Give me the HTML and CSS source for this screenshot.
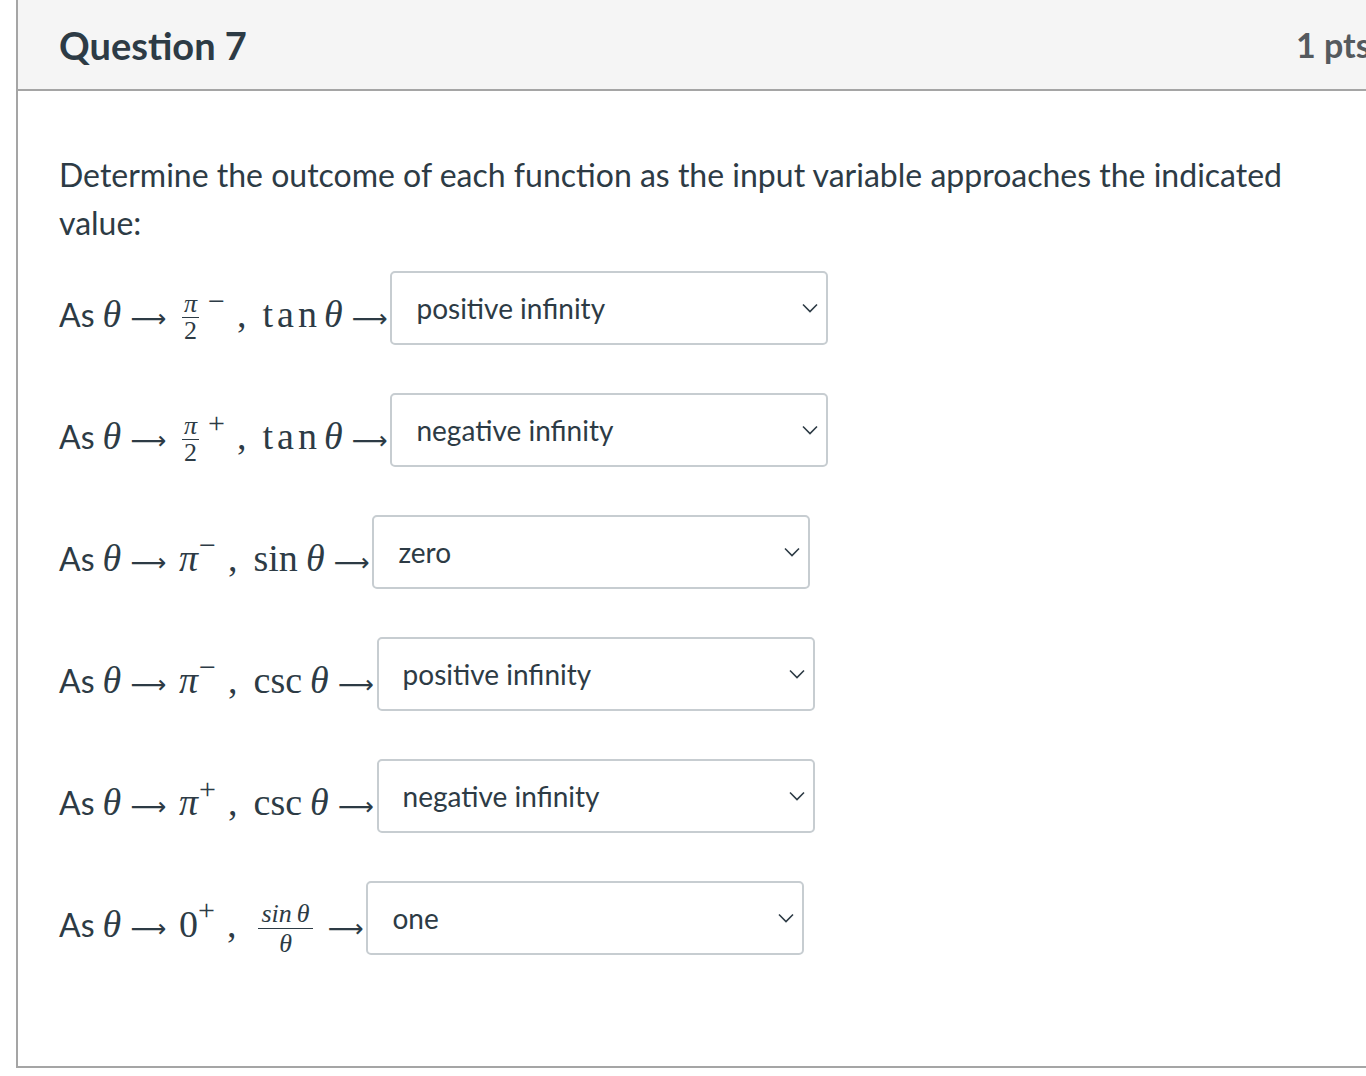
FILE: index.html
```html
<!DOCTYPE html>
<html>
<head>
<meta charset="utf-8">
<link rel="stylesheet" href="styles.css">
</head>
<body>
<div class="question">
  <div class="header">
    <h2 class="title">Question 7</h2>
    <span class="pts">1 pts</span>
  </div>
  <div class="content">
    <p class="prompt">Determine the outcome of each function as the input variable approaches the indicated value:</p>

    <div class="row">
      <span class="math"><span class="as">As</span><i class="v">θ</i><span class="arr">⟶</span><span class="frac"><span class="num">π</span><span class="den">2</span></span><span class="sup sup-f">−</span><span class="comma">,</span><span class="fn tan">tan</span><i class="v">θ</i><span class="arr last">⟶</span></span>
      <div class="select"><span class="val">positive infinity</span><svg class="chev" width="16" height="10" viewBox="0 0 16 10"><path d="M1 1.5 L8 8.5 L15 1.5" fill="none" stroke="#2d3b45" stroke-width="1.6"/></svg></div>
    </div>

    <div class="row">
      <span class="math"><span class="as">As</span><i class="v">θ</i><span class="arr">⟶</span><span class="frac"><span class="num">π</span><span class="den">2</span></span><span class="sup sup-f">+</span><span class="comma">,</span><span class="fn tan">tan</span><i class="v">θ</i><span class="arr last">⟶</span></span>
      <div class="select"><span class="val">negative infinity</span><svg class="chev" width="16" height="10" viewBox="0 0 16 10"><path d="M1 1.5 L8 8.5 L15 1.5" fill="none" stroke="#2d3b45" stroke-width="1.6"/></svg></div>
    </div>

    <div class="row">
      <span class="math"><span class="as">As</span><i class="v">θ</i><span class="arr">⟶</span><span class="pi">π</span><span class="sup">−</span><span class="comma">,</span><span class="fn">sin</span><i class="v">θ</i><span class="arr last">⟶</span></span>
      <div class="select"><span class="val">zero</span><svg class="chev" width="16" height="10" viewBox="0 0 16 10"><path d="M1 1.5 L8 8.5 L15 1.5" fill="none" stroke="#2d3b45" stroke-width="1.6"/></svg></div>
    </div>

    <div class="row">
      <span class="math"><span class="as">As</span><i class="v">θ</i><span class="arr">⟶</span><span class="pi">π</span><span class="sup">−</span><span class="comma">,</span><span class="fn">csc</span><i class="v">θ</i><span class="arr last">⟶</span></span>
      <div class="select"><span class="val">positive infinity</span><svg class="chev" width="16" height="10" viewBox="0 0 16 10"><path d="M1 1.5 L8 8.5 L15 1.5" fill="none" stroke="#2d3b45" stroke-width="1.6"/></svg></div>
    </div>

    <div class="row">
      <span class="math"><span class="as">As</span><i class="v">θ</i><span class="arr">⟶</span><span class="pi">π</span><span class="sup">+</span><span class="comma">,</span><span class="fn">csc</span><i class="v">θ</i><span class="arr last">⟶</span></span>
      <div class="select"><span class="val">negative infinity</span><svg class="chev" width="16" height="10" viewBox="0 0 16 10"><path d="M1 1.5 L8 8.5 L15 1.5" fill="none" stroke="#2d3b45" stroke-width="1.6"/></svg></div>
    </div>

    <div class="row">
      <span class="math"><span class="as">As</span><i class="v">θ</i><span class="arr">⟶</span><span class="zero">0</span><span class="sup sup-z">+</span><span class="comma">,</span><span class="frac big"><span class="num"><span class="fn-s">sin</span><i>θ</i></span><span class="den"><i>θ</i></span></span><span class="arr last">⟶</span></span>
      <div class="select"><span class="val">one</span><svg class="chev" width="16" height="10" viewBox="0 0 16 10"><path d="M1 1.5 L8 8.5 L15 1.5" fill="none" stroke="#2d3b45" stroke-width="1.6"/></svg></div>
    </div>
  </div>
</div>
</body>
</html>
```

FILE: styles.css
```css
html, body {
  margin: 0;
  padding: 0;
  background: #ffffff;
  overflow: hidden;
}

body {
  font-family: Lato, "Open Sans", sans-serif;
  color: #2d3b45;
}

.question {
  margin-left: 16px;
  width: 1420px;
  height: 1068px;
  box-sizing: border-box;
  border: 2px solid #a5a5a5;
  border-top: none;
}

.header {
  height: 89px;
  background: #f5f5f5;
  border-bottom: 2px solid #a5a5a5;
  display: flex;
  align-items: center;
  padding-left: 41px;
}

.title {
  margin: 0;
  font-size: 38px;
  font-weight: 700;
  color: #2d3b45;
  flex: 0 0 auto;
  width: 1237px;
}

.pts {
  font-size: 34px;
  font-weight: 700;
  color: #555a5e;
}

.content {
  padding: 60px 41px 0 41px;
}

.prompt {
  margin: 0 0 24px 0;
  font-size: 32px;
  line-height: 48px;
  width: 1240px;
}

.row {
  display: flex;
  align-items: baseline;
  height: 74px;
  margin-bottom: 48px;
}

.math {
  display: inline-block;
  font-family: "Liberation Serif", "Times New Roman", serif;
  font-size: 38px;
  line-height: 1;
  color: #2d3b45;
  white-space: nowrap;
  position: relative;
  top: 8px;
}

.as {
  font-family: Lato, sans-serif;
  font-size: 32px;
  margin-right: 8px;
}

.v {
  font-style: italic;
  margin-right: 9px;
}

.arr {
  font-family: "DejaVu Sans", sans-serif;
  font-size: 25px;
  margin-right: 13px;
}

.arr.last {
  margin-right: 0;
}

.frac {
  display: inline-flex;
  flex-direction: column;
  align-items: center;
  font-size: 26px;
  line-height: 22px;
  vertical-align: 15px;
  margin-left: 3px;
  margin-right: 8px;
}

.frac .num {
  font-style: italic;
  padding: 0 2px 2px;
  border-bottom: 1.5px solid #2d3b45;
}

.frac .den {
  padding-top: 2px;
}

.frac.big {
  margin-right: 15px;
  margin-left: 6px;
}

.frac.big .num {
  padding: 0 3px 3px;
}

.frac.big .den {
  padding-top: 4px;
}

.fn-s {
  margin-right: 5px;
}

.pi {
  font-style: italic;
  margin-right: 1px;
}

.sup {
  font-size: 30px;
  vertical-align: 16px;
  margin-right: 12px;
}

.sup-f {
  margin-left: 1px;
  margin-right: 12px;
}

.sup-z {
  vertical-align: 17px;
}

.comma {
  margin-right: 16px;
}

.fn {
  margin-right: 8px;
}

.fn.tan {
  letter-spacing: 4px;
  margin-right: 3px;
}

.select {
  display: flex;
  align-items: center;
  justify-content: space-between;
  width: 438px;
  height: 74px;
  box-sizing: border-box;
  border: 2px solid #c7cdd1;
  border-radius: 5px;
  padding: 0 8px 0 24px;
  background: #fff;
  margin-left: 3px;
}

.val {
  font-family: Lato, sans-serif;
  font-size: 28px;
  color: #2d3b45;
}

.chev {
  flex: 0 0 auto;
}
```
